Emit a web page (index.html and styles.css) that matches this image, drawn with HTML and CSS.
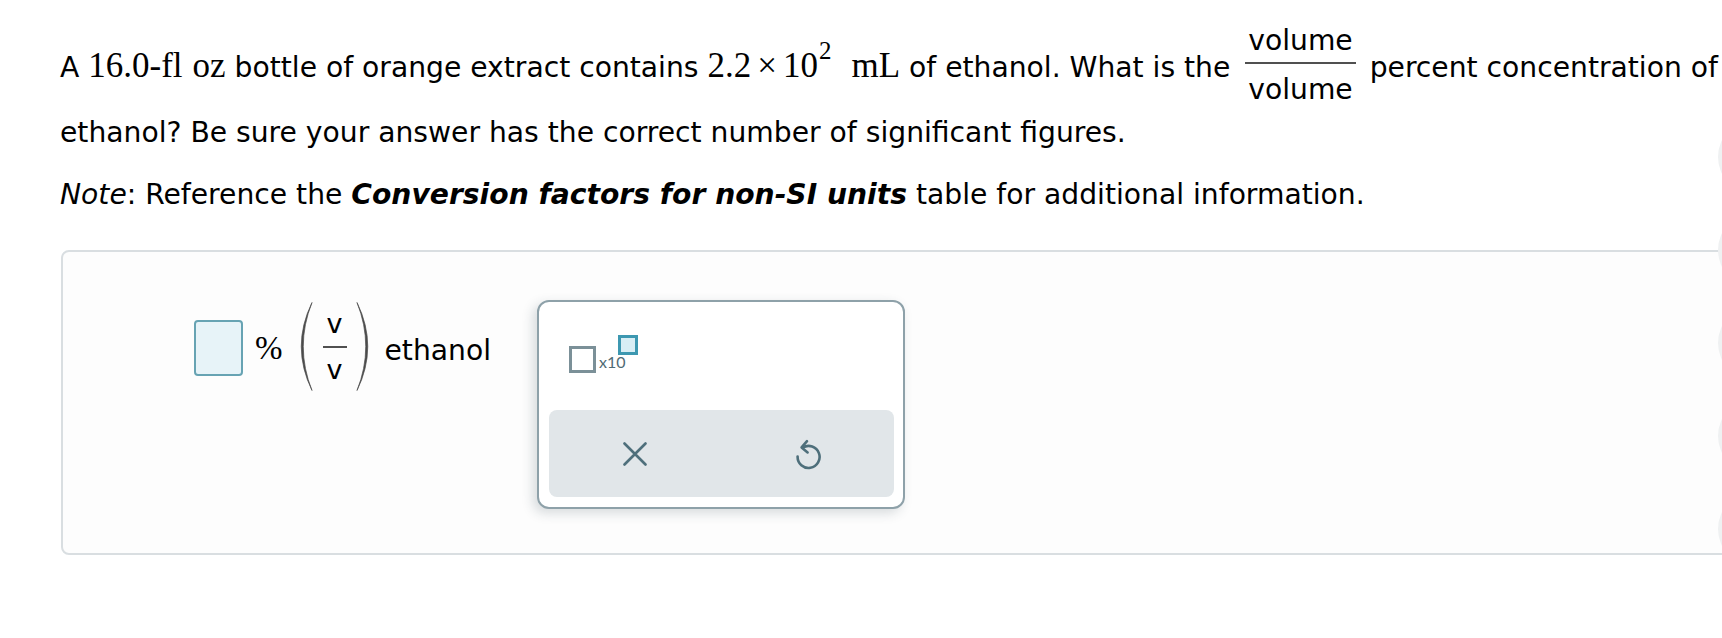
FILE: index.html
```html
<!DOCTYPE html>
<html>
<head>
<meta charset="utf-8">
<title>Percent concentration</title>
<link rel="stylesheet" href="styles.css">
</head>
<body>
<div class="page">
  <p class="question">A <span class="math">16.0-fl<span class="mthin"></span>oz</span> bottle of orange extract contains <span class="math">2.2<span class="times">×</span>10<sup class="exp">2</sup><span class="mspace"></span>mL</span> of ethanol. What is the <span class="frac"><span class="num">volume</span><span class="den">volume</span></span> percent concentration of<br>ethanol? Be sure your answer has the correct number of significant figures.</p>
  <p class="note"><em>Note</em>: Reference the <strong><em>Conversion factors for non-SI units</em></strong> table for additional information.</p>

  <div class="card">
    <div class="answer">
      <span class="input"></span>
      <span class="pct">%</span>
      <span class="vv">
        <svg class="paren" width="14" height="91" viewBox="0 0 14 91"><path d="M13 1.5 Q-8.5 45.5 13 89.5 Q-4.5 45.5 13 1.5 Z" fill="#4a4a4a" stroke="#4a4a4a" stroke-width="0.7" stroke-linejoin="round"/></svg>
        <span class="vfrac"><span class="vtop">v</span><span class="vbot">v</span></span>
        <svg class="paren" width="14" height="91" viewBox="0 0 14 91"><path d="M1 1.5 Q22.5 45.5 1 89.5 Q18.5 45.5 1 1.5 Z" fill="#4a4a4a" stroke="#4a4a4a" stroke-width="0.7" stroke-linejoin="round"/></svg>
      </span>
      <span class="word">ethanol</span>
    </div>

    <div class="panel">
      <div class="sci-area">
        <div class="sci">
          <span class="sci-box"></span><span class="sci-x">x10</span><span class="sci-exp"></span>
        </div>
      </div>
      <div class="actions">
        <button class="act" type="button" aria-label="Clear">
          <svg width="24" height="24" viewBox="0 0 24 24"><path d="M1.5 1.5 L22.5 22.5 M22.5 1.5 L1.5 22.5" fill="none" stroke="#4e6f7b" stroke-width="2.6" stroke-linecap="round"/></svg>
        </button>
        <button class="act" type="button" aria-label="Undo">
          <svg width="28" height="32" viewBox="0 0 28 32"><path d="M8.8 9.6 A11 11 0 1 1 3.6 18.6" fill="none" stroke="#4e6f7b" stroke-width="2.6" stroke-linecap="round"/><path d="M13 3.2 L7.6 9.4 L13.6 14.4" fill="none" stroke="#4e6f7b" stroke-width="2.6" stroke-linecap="round" stroke-linejoin="round"/></svg>
        </button>
      </div>
    </div>
  </div>
</div>

<div class="rail">
  <span class="dot"></span><span class="dot"></span><span class="dot"></span><span class="dot"></span><span class="dot"></span>
</div>
</body>
</html>
```

FILE: styles.css
```css
html, body {
  margin: 0;
  padding: 0;
  background: #ffffff;
}

body {
  width: 1722px;
  height: 638px;
  overflow: hidden;
  position: relative;
  font-family: "DejaVu Sans", Verdana, sans-serif;
  font-size: 28.2px;
  color: #000000;
}

.page {
  padding-left: 60px;
}

.question {
  margin: 25px 0 0;
  line-height: 54px;
  white-space: nowrap;
}

.note {
  margin: 8px 0 0;
  line-height: 54px;
  white-space: nowrap;
}

.math {
  font-family: "Liberation Serif", "Times New Roman", serif;
  font-size: 35px;
}

.mthin {
  display: inline-block;
  width: 10px;
}

.times {
  margin: 0 6px;
}

.exp {
  font-size: 25px;
  line-height: 0;
  vertical-align: 18px;
  margin-left: 1px;
}

.mspace {
  display: inline-block;
  width: 20px;
}

.frac {
  display: inline-flex;
  flex-direction: column;
  vertical-align: 27px;
  margin: 0 5px 0 6px;
}

.num {
  line-height: 32px;
  padding: 0 3px 5px;
  text-align: center;
  border-bottom: 2px solid #505050;
}

.den {
  line-height: 32px;
  padding: 10px 3px 0;
  text-align: center;
}

/* answer card */
.card {
  margin: 28px 0 0 1px;
  width: 1700px;
  height: 305px;
  box-sizing: border-box;
  border: 2px solid #d9dee1;
  border-radius: 8px;
  background: #fdfdfd;
  padding: 46px 0 46px 131px;
  display: flex;
  align-items: flex-start;
}

.answer {
  display: flex;
  align-items: center;
  height: 91px;
  margin-top: 3px;
}

.input {
  width: 49px;
  height: 56px;
  box-sizing: border-box;
  border: 2px solid #67a3b3;
  border-radius: 4px;
  background: #e7f3f8;
  margin-top: 3px;
}

.pct {
  font-family: "Liberation Serif", "Times New Roman", serif;
  font-size: 33px;
  margin-left: 12px;
  margin-top: 4px;
}

.vv {
  display: flex;
  align-items: center;
  margin-left: 16px;
}

.paren {
  display: block;
}

.vfrac {
  display: flex;
  flex-direction: column;
  align-items: center;
  width: 24px;
  margin: 0 9px 0 10px;
  font-size: 27px;
}

.vtop {
  line-height: 26px;
  padding-bottom: 9px;
  border-bottom: 2px solid #505050;
  width: 24px;
  text-align: center;
}

.vbot {
  line-height: 26px;
  padding-top: 9px;
  text-align: center;
}

.word {
  margin-left: 15px;
  margin-top: 7px;
}

/* popover keypad */
.panel {
  margin-left: 46px;
  width: 368px;
  height: 209px;
  box-sizing: border-box;
  border: 2px solid #8ea1a9;
  border-radius: 12px;
  background: #ffffff;
  box-shadow: -4px 4px 12px rgba(40, 60, 70, 0.18);
  display: flex;
  flex-direction: column;
  padding: 0 9px 10px 10px;
  margin-top: 2px;
}

.sci-area {
  height: 108px;
  box-sizing: border-box;
  padding: 33px 0 0 20px;
}

.sci {
  display: flex;
  align-items: flex-start;
  height: 39px;
}

.sci-box {
  width: 27px;
  height: 27px;
  box-sizing: border-box;
  border: 3px solid #7b9098;
  background: #ffffff;
  margin-top: 11px;
}

.sci-x {
  font-family: Lato, "Open Sans", sans-serif;
  font-size: 16px;
  line-height: 16px;
  color: #4f6a74;
  margin: 19px 0 0 3px;
}

.sci-exp {
  width: 20px;
  height: 20px;
  box-sizing: border-box;
  border: 3px solid #3d98b1;
  background: #d8eef5;
  margin-left: -8px;
}

.actions {
  height: 87px;
  background: #e1e6e9;
  border-radius: 8px;
  display: flex;
}

.act {
  flex: 1;
  display: flex;
  align-items: center;
  justify-content: center;
  border: 0;
  background: none;
  padding: 0;
  margin: 0;
}

.act svg {
  display: block;
}

/* faint side rail buttons, clipped by the window edge */
.rail {
  position: absolute;
  left: 1718px;
  top: 119px;
  display: flex;
  flex-direction: column;
  gap: 17px;
}

.dot {
  display: block;
  width: 76px;
  height: 76px;
  border-radius: 50%;
  background: #eff1f2;
}
```
